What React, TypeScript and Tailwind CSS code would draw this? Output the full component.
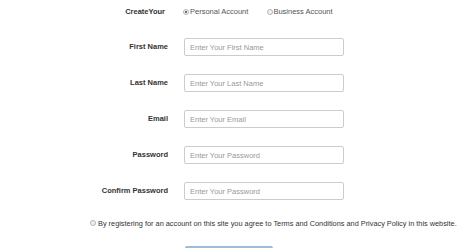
import React from 'react';

const fields = [
  { label: 'First Name', placeholder: 'Enter Your First Name' },
  { label: 'Last Name', placeholder: 'Enter Your Last Name' },
  { label: 'Email', placeholder: 'Enter Your Email' },
  { label: 'Password', placeholder: 'Enter Your Password' },
  { label: 'Confirm Password', placeholder: 'Enter Your Password' },
];

function Radio({ checked }: { checked?: boolean }) {
  return (
    <span className="inline-flex w-[6px] h-[6px] rounded-full border border-[#b5b5b5] bg-[#f2f2f2] items-center justify-center">
      {checked && <span className="w-[2px] h-[2px] rounded-full bg-[#444]" />}
    </span>
  );
}

export default function App() {
  return (
    <div
      className="w-[474px] h-[248px] bg-white overflow-hidden text-[#333] text-[7.5px]"
      style={{ fontFamily: '"Liberation Sans", Arial, sans-serif' }}
    >
      {/* Account type */}
      <div className="flex items-center h-[24px]">
        <div className="w-[165px] text-right font-bold">CreateYour</div>
        <label className="ml-[18px] flex items-center gap-[1px] text-[#555]">
          <Radio checked />
          Personal Account
        </label>
        <label className="ml-[19px] flex items-center text-[#555]">
          <Radio />
          Business Account
        </label>
      </div>

      {/* Fields */}
      <div className="flex flex-col gap-[18px] mt-[14px]">
        {fields.map((f) => (
          <div key={f.label} className="flex items-center h-[18px]">
            <div className="w-[168px] text-right font-bold">{f.label}</div>
            <input
              type={f.label.includes('Password') ? 'password' : 'text'}
              placeholder={f.placeholder}
              className="ml-[16px] w-[160px] h-[18px] border border-[#ccc] rounded-[2px] px-[5px] text-[7.5px] placeholder:text-[#999] outline-none"
            />
          </div>
        ))}
      </div>

      {/* Terms */}
      <div className="flex items-center ml-[90px] mt-[18px] h-[10px] text-[7.35px]">
        <span className="w-[6px] h-[6px] rounded-full border border-[#b5b5b5] bg-[#f0f0f0] mr-[2px]" />
        <span>
          By registering for an account on this site you agree to Terms and Conditions and Privacy Policy in this website.
        </span>
      </div>

      {/* Submit */}
      <button className="block ml-[185px] mt-[18px] w-[88px] h-[20px] rounded-t-[2px] bg-[#9dbcdb]" />
    </div>
  );
}
